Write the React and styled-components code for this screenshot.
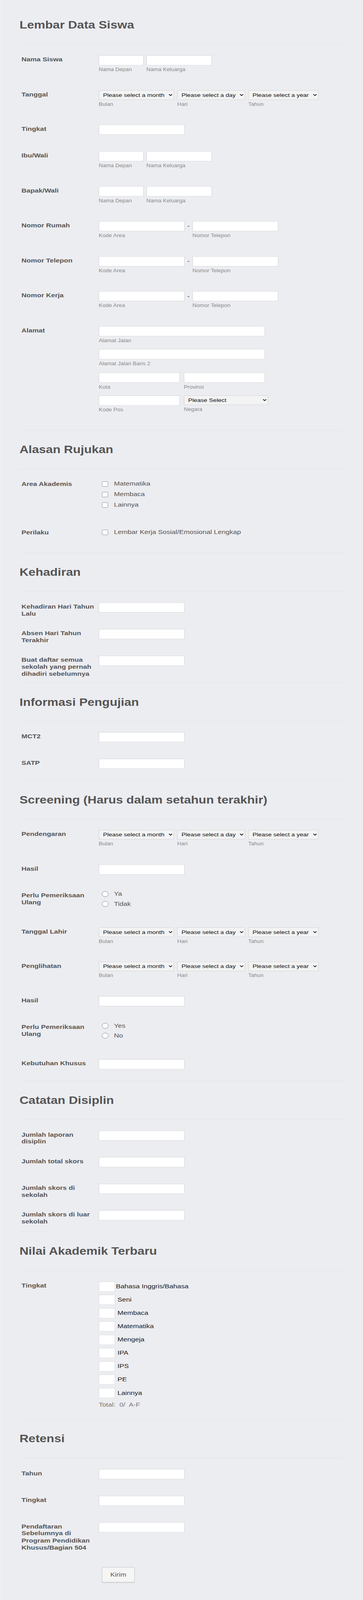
import React, { useState, useLayoutEffect } from 'react';
import styled, { createGlobalStyle } from 'styled-components';

const PAGE_HEIGHT = 4872;

const GlobalStyle = createGlobalStyle`
  html, body {
    margin: 0;
    padding: 0;
    background: #ecedf1;
  }
  body {
    font-family: "Liberation Sans", Arial, Helvetica, sans-serif;
    color: #555;
  }
  * {
    box-sizing: border-box;
  }
`;

// Fits the full-height form into the browser window when the window is shorter
const Frame = styled.div`
  width: 930px;
  overflow: hidden;
`;

const Page = styled.form`
  width: 930px;
  min-height: ${PAGE_HEIGHT}px;
  margin: 0;
  padding: 17px 49px 45px 49px;
  border-left: 1px dotted #f9f9fb;
  transform-origin: top left;
`;

const SectionHeader = styled.div`
  height: 119px;
  display: flex;
  align-items: center;
  border-top: ${p => (p.$first ? 'none' : '1px solid #e1e3e8')};
  border-bottom: 1px solid #e1e3e8;
`;

const Title = styled.h2`
  margin: 0;
  font-size: 32px;
  font-weight: 700;
  line-height: 1.2;
  color: #555;
`;

const FieldList = styled.div`
  padding-top: 17px;
`;

const Row = styled.div`
  display: flex;
  align-items: flex-start;
  padding: 15px 0;
`;

const Label = styled.label`
  width: 203px;
  flex-shrink: 0;
  padding: 3px 8px 0 5px;
  font-size: 18px;
  font-weight: 700;
  line-height: 1.2;
  color: #555;
`;

const Field = styled.div`
  padding-bottom: ${p => p.$pb ?? 20}px;
`;

// Inputs
const TextInput = styled.input.attrs({ type: 'text' })`
  display: block;
  width: ${p => p.$w || 220}px;
  height: 31px;
  margin: 0;
  padding: 0 6px;
  border: 1px solid #d4d5d8;
  border-radius: 0;
  background: #fff;
  box-shadow: inset 0 1px 2px rgba(0, 0, 0, 0.07);
  font: 16px "Liberation Sans", Arial, sans-serif;
  color: #333;
`;

const Select = styled.select`
  display: block;
  width: ${p => p.$w}px;
  height: 29px;
  margin: 0;
  padding: 0 2px 0 6px;
  border: 1px solid #cfd0d2;
  border-radius: 0;
  background-color: #f3f3f3;
  font: 16px "Liberation Sans", Arial, sans-serif;
  color: #111;
`;

const SubLabel = styled.span`
  display: block;
  margin-top: 2px;
  font-size: 14.4px;
  line-height: 23.5px;
  color: #8a8a8a;
  white-space: nowrap;
`;

const Unit = styled.div`
  display: flex;
  flex-direction: column;
`;

const Inline = styled.div`
  display: flex;
  align-items: flex-start;
  gap: ${p => p.$gap ?? 8}px;
`;

const AddressLine = styled(Inline)`
  margin-bottom: 14px;
`;

const Dash = styled.span`
  width: 20px;
  line-height: 31px;
  text-align: center;
  font-size: 16px;
  font-weight: 700;
  color: #555;
`;

// Checkbox / radio groups
const OptionGroup = styled.div`
  margin-top: ${p => (p.$radio ? -5 : -3)}px;
  padding-bottom: ${p => p.$pb ?? 24}px;
`;

const Option = styled.label`
  display: flex;
  align-items: center;
  height: ${p => (p.$radio ? 30 : 32)}px;
  padding-left: 8px;
  font-size: 18px;
  color: #555;
  white-space: nowrap;
`;

const CheckBox = styled.input.attrs({ type: 'checkbox' })`
  appearance: none;
  width: 16px;
  height: 16px;
  margin: 0 15px 0 0;
  border: 1px solid #858585;
  border-radius: 3px;
  background: #fff;
`;

const Radio = styled.input.attrs({ type: 'radio' })`
  appearance: none;
  width: 17px;
  height: 17px;
  margin: 0 14px 0 0;
  border: 1px solid #7a7a7a;
  border-radius: 50%;
  background: #fff;
`;

// Grade widget
const GradeList = styled.div`
  display: flex;
  flex-direction: column;
  gap: 9.5px;
`;

const GradeItem = styled.div`
  display: flex;
  align-items: center;
`;

const GradeBox = styled.input.attrs({ type: 'text' })`
  width: 42px;
  height: 31px;
  margin: 0;
  border: 1px solid #d9dadc;
  background: #fff;
  box-shadow: inset 0 1px 2px rgba(0, 0, 0, 0.07);
`;

const GradeText = styled.span`
  margin-left: ${p => (p.$tight ? 2 : 6)}px;
  font-size: 18px;
  color: #222;
`;

const Total = styled.div`
  margin-top: 10px;
  font-size: 18px;
  line-height: 20px;
  color: #777;
`;

// Submit
const ButtonRow = styled.div`
  display: flex;
  padding: 33px 0 0 211px;
`;

const SubmitButton = styled.button`
  width: 84px;
  height: 46px;
  border: 1px solid #cacbcd;
  border-radius: 3px;
  background: #f5f5f5;
  box-shadow: 0 1px 2px rgba(0, 0, 0, 0.15);
  font: 18px "Liberation Sans", Arial, sans-serif;
  color: #555;
`;

const dateSelects = [
  { w: 193, text: 'Please select a month', sub: 'Bulan' },
  { w: 174, text: 'Please select a day', sub: 'Hari' },
  { w: 180, text: 'Please select a year', sub: 'Tahun' },
];

const sections = [
  {
    title: 'Lembar Data Siswa',
    fields: [
      { label: 'Nama Siswa', type: 'name' },
      { label: 'Tanggal', type: 'date' },
      { label: 'Tingkat', type: 'text' },
      { label: 'Ibu/Wali', type: 'name' },
      { label: 'Bapak/Wali', type: 'name' },
      { label: 'Nomor Rumah', type: 'phone' },
      { label: 'Nomor Telepon', type: 'phone' },
      { label: 'Nomor Kerja', type: 'phone' },
      { label: 'Alamat', type: 'address' },
    ],
  },
  {
    title: 'Alasan Rujukan',
    fields: [
      { label: 'Area Akademis', type: 'checks', options: ['Matematika', 'Membaca', 'Lainnya'] },
      { label: 'Perilaku', type: 'checks', options: ['Lembar Kerja Sosial/Emosional Lengkap'], pb: 31 },
    ],
  },
  {
    title: 'Kehadiran',
    fields: [
      { label: 'Kehadiran Hari Tahun Lalu', type: 'text' },
      { label: 'Absen Hari Tahun Terakhir', type: 'text' },
      { label: 'Buat daftar semua sekolah yang pernah dihadiri sebelumnya', type: 'text' },
    ],
  },
  {
    title: 'Informasi Pengujian',
    fields: [
      { label: 'MCT2', type: 'text' },
      { label: 'SATP', type: 'text' },
    ],
  },
  {
    title: 'Screening (Harus dalam setahun terakhir)',
    fields: [
      { label: 'Pendengaran', type: 'date' },
      { label: 'Hasil', type: 'text' },
      { label: 'Perlu Pemeriksaan Ulang', type: 'radios', options: ['Ya', 'Tidak'] },
      { label: 'Tanggal Lahir', type: 'date' },
      { label: 'Penglihatan', type: 'date' },
      { label: 'Hasil', type: 'text' },
      { label: 'Perlu Pemeriksaan Ulang', type: 'radios', options: ['Yes', 'No'] },
      { label: 'Kebutuhan Khusus', type: 'text' },
    ],
  },
  {
    title: 'Catatan Disiplin',
    fields: [
      { label: 'Jumlah laporan disiplin', type: 'text' },
      { label: 'Jumlah total skors', type: 'text' },
      { label: 'Jumlah skors di sekolah', type: 'text' },
      { label: 'Jumlah skors di luar sekolah', type: 'text' },
    ],
  },
  {
    title: 'Nilai Akademik Terbaru',
    fields: [
      {
        label: 'Tingkat',
        type: 'grades',
        options: ['Bahasa Inggris/Bahasa', 'Seni', 'Membaca', 'Matematika', 'Mengeja', 'IPA', 'IPS', 'PE', 'Lainnya'],
      },
    ],
  },
  {
    title: 'Retensi',
    fields: [
      { label: 'Tahun', type: 'text' },
      { label: 'Tingkat', type: 'text' },
      { label: 'Pendaftaran Sebelumnya di Program Pendidikan Khusus/Bagian 504', type: 'text' },
    ],
  },
];

const InputWithSub = ({ w, sub }) => (
  <Unit>
    <TextInput $w={w} />
    <SubLabel>{sub}</SubLabel>
  </Unit>
);

const SelectWithSub = ({ w, text, sub }) => (
  <Unit>
    <Select $w={w} defaultValue="">
      <option value="">{text}</option>
    </Select>
    <SubLabel>{sub}</SubLabel>
  </Unit>
);

const FieldBody = ({ field }) => {
  switch (field.type) {
    case 'name':
      return (
        <Field>
          <Inline $gap={7}>
            <InputWithSub w={115} sub="Nama Depan" />
            <InputWithSub w={168} sub="Nama Keluarga" />
          </Inline>
        </Field>
      );
    case 'date':
      return (
        <Field>
          <Inline $gap={8}>
            {dateSelects.map(s => (
              <SelectWithSub key={s.sub} {...s} />
            ))}
          </Inline>
        </Field>
      );
    case 'phone':
      return (
        <Field>
          <Inline $gap={0}>
            <InputWithSub w={220} sub="Kode Area" />
            <Dash>-</Dash>
            <InputWithSub w={220} sub="Nomor Telepon" />
          </Inline>
        </Field>
      );
    case 'address':
      return (
        <Field>
          <AddressLine>
            <InputWithSub w={426} sub="Alamat Jalan" />
          </AddressLine>
          <AddressLine>
            <InputWithSub w={426} sub="Alamat Jalan Baris 2" />
          </AddressLine>
          <AddressLine $gap={10}>
            <InputWithSub w={208} sub="Kota" />
            <InputWithSub w={208} sub="Provinsi" />
          </AddressLine>
          <AddressLine $gap={10}>
            <InputWithSub w={208} sub="Kode Pos" />
            <SelectWithSub w={216} text="Please Select" sub="Negara" />
          </AddressLine>
        </Field>
      );
    case 'checks':
      return (
        <OptionGroup $pb={field.pb}>
          {field.options.map(o => (
            <Option key={o}>
              <CheckBox />
              {o}
            </Option>
          ))}
        </OptionGroup>
      );
    case 'radios':
      return (
        <OptionGroup $radio $pb={26}>
          {field.options.map(o => (
            <Option key={o} $radio>
              <Radio name={field.options.join('-')} />
              {o}
            </Option>
          ))}
        </OptionGroup>
      );
    case 'grades':
      return (
        <Field>
          <GradeList>
            {field.options.map((o, i) => (
              <GradeItem key={o}>
                <GradeBox />
                <GradeText $tight={i === 0}>{o}</GradeText>
              </GradeItem>
            ))}
          </GradeList>
          <Total>Total:&nbsp; 0/&nbsp; A-F</Total>
        </Field>
      );
    default:
      return (
        <Field>
          <TextInput $w={220} />
        </Field>
      );
  }
};

const getScale = () =>
  typeof window === 'undefined' ? 1 : Math.min(1, window.innerHeight / PAGE_HEIGHT);

const App = () => {
  const [scale, setScale] = useState(getScale);

  useLayoutEffect(() => {
    const onResize = () => setScale(getScale());
    window.addEventListener('resize', onResize);
    return () => window.removeEventListener('resize', onResize);
  }, []);

  return (
    <>
      <GlobalStyle />
      <Frame style={{ height: PAGE_HEIGHT * scale }}>
        <Page
          onSubmit={e => e.preventDefault()}
          style={scale < 1 ? { transform: `scaleY(${scale})` } : undefined}
        >
          {sections.map((section, si) => (
            <section key={section.title}>
              <SectionHeader $first={si === 0}>
                <Title>{section.title}</Title>
              </SectionHeader>
              <FieldList>
                {section.fields.map((field, fi) => (
                  <Row key={fi}>
                    <Label>{field.label}</Label>
                    <FieldBody field={field} />
                  </Row>
                ))}
              </FieldList>
            </section>
          ))}
          <ButtonRow>
            <SubmitButton type="submit">Kirim</SubmitButton>
          </ButtonRow>
        </Page>
      </Frame>
    </>
  );
};

export default App;
